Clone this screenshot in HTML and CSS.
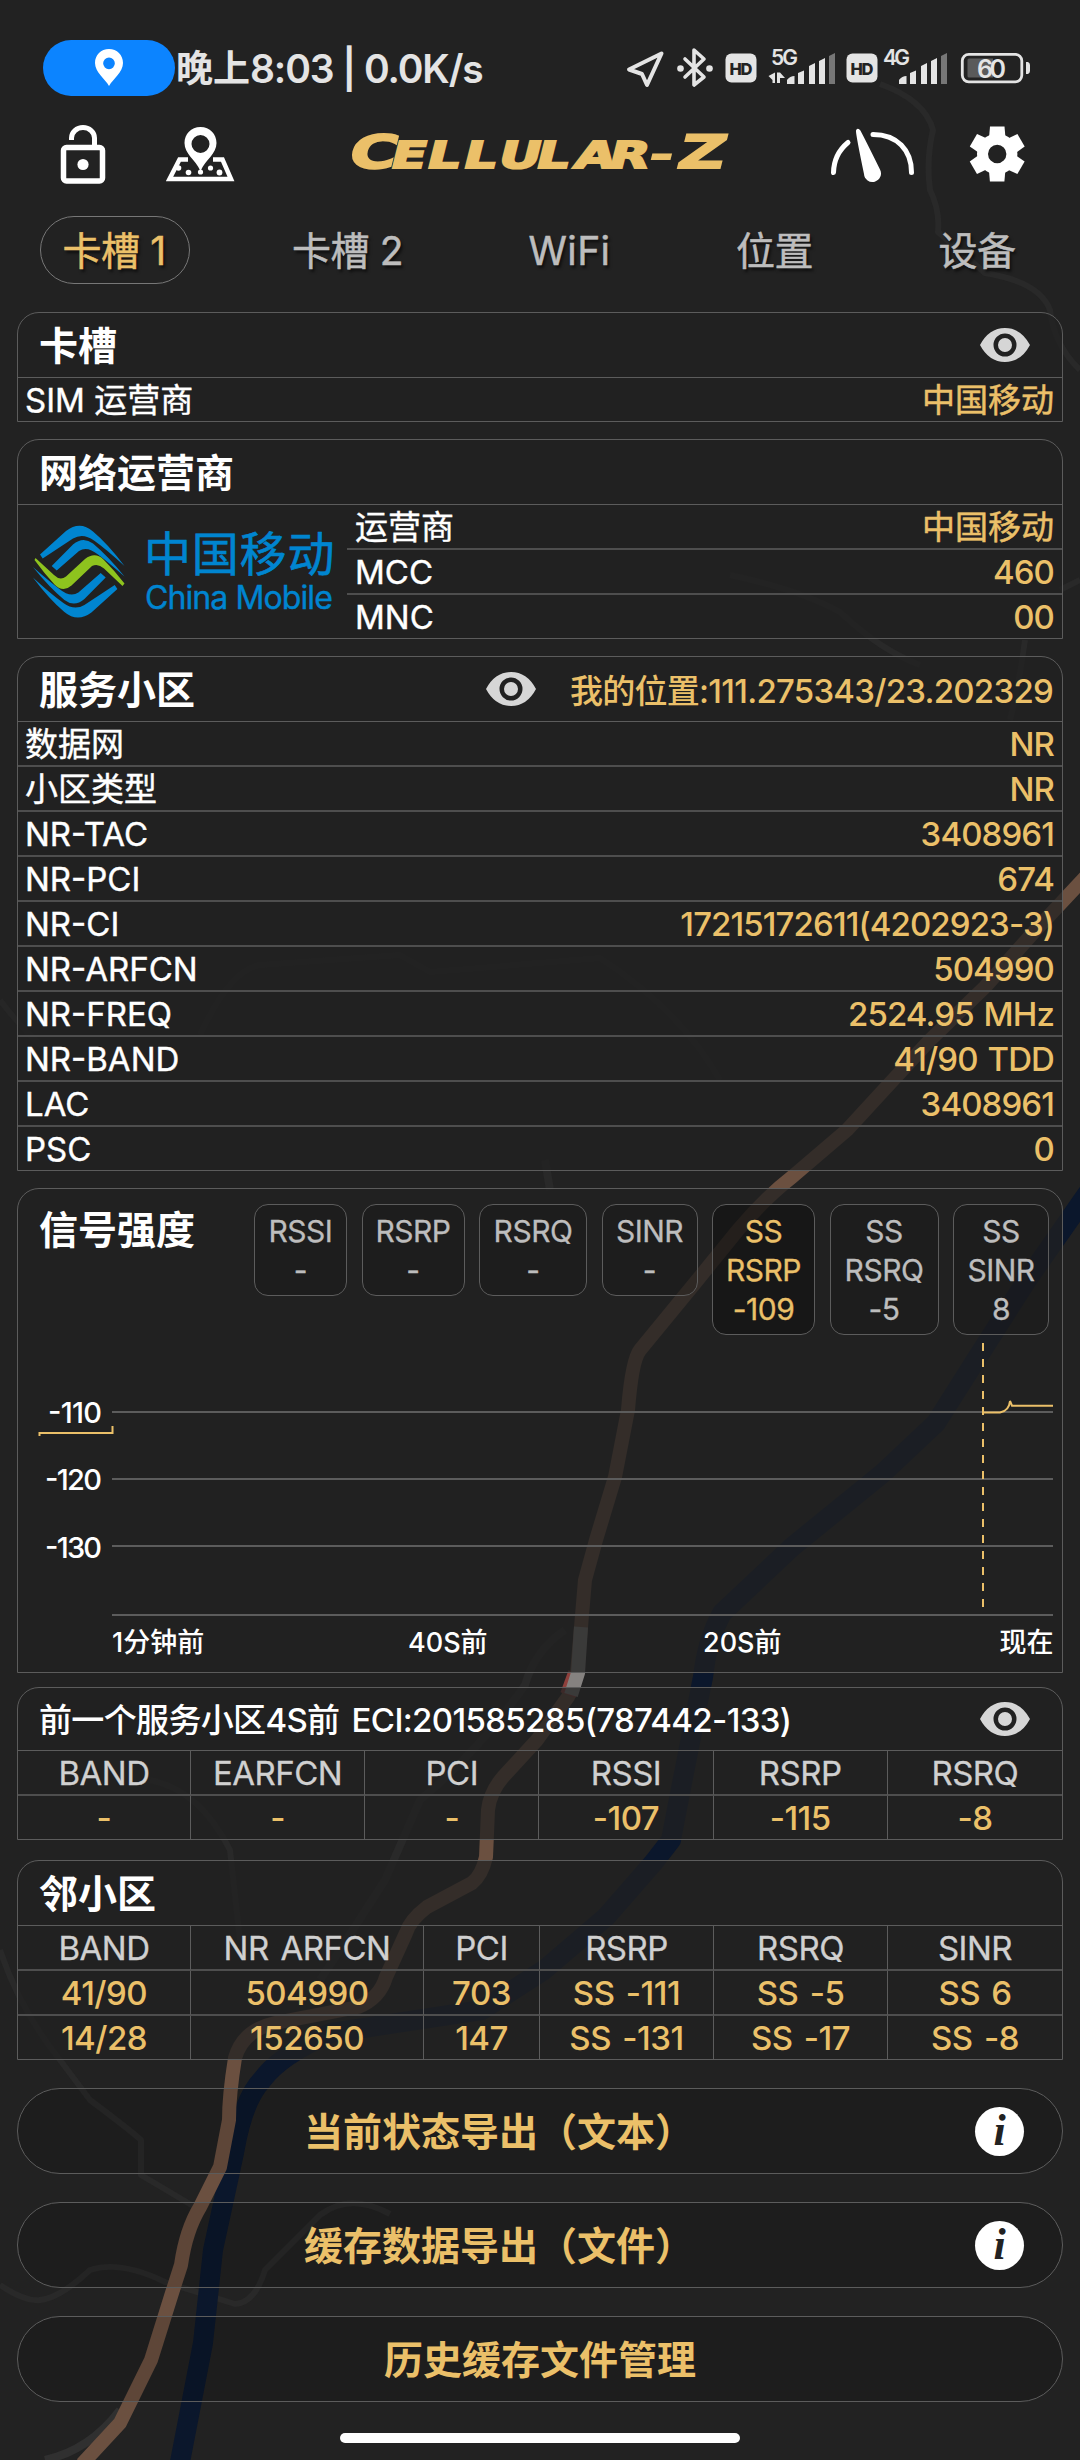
FILE: index.html
```html
<!DOCTYPE html>
<html lang="zh-CN">
<head>
<meta charset="utf-8">
<title>Cellular-Z</title>
<link rel="stylesheet" href="styles.css">
</head>
<body>
<svg class="map" viewBox="0 0 1080 2460" fill="none" stroke-linejoin="round" stroke-linecap="butt">
  <g stroke="#292929" stroke-width="6">
    <path d="M880 84Q925 100 933 130Q926 160 930 190Q940 210 938 232L985 273Q1040 282 1050 310Q1054 345 1080 370"/>
    <path d="M730 575Q800 590 840 612Q880 650 920 665"/>
    <path d="M1025 640Q1020 680 1010 720M1060 590L1080 580"/>
    <path d="M0 1000Q30 1040 60 1060M200 1035Q230 970 260 965L400 955L430 972L600 958Q680 1010 720 1080" stroke="#262626"/>
    <path d="M545 1160L550 1190M565 1630Q535 1650 525 1685Q480 1750 420 1800L385 1880Q340 1950 320 1980" stroke-width="8"/>
    <path d="M150 1780Q200 1790 230 1850L240 1940M0 1950Q20 2010 60 2060L90 2100Q130 2130 141 2140V2175L200 2210"/>
    <path d="M0 2285Q25 2302 40 2300Q60 2298 90 2270Q120 2260 165 2282L235 2304Q255 2303 265 2270L320 2215Q350 2192 390 2214"/>
  </g>
  <path d="M120 2410Q90 2450 45 2460" stroke="#303030" stroke-width="8"/>
  <path stroke="#0b172c" stroke-width="20" d="M1090 1190L1027 1280L974 1363L936 1423L883 1473L792 1547L722 1613Q707 1640 703 1677L682 1783L671 1840L654 1862L606 1917L544 1970L482 2010L331 2033Q280 2055 262 2080Q243 2100 234 2153L213 2250L203 2343L180 2462"/>
  <path stroke="#6b5040" stroke-width="14" d="M1090 872L1033 933L985 987L930 1040L881 1093L847 1130L792 1177Q765 1198 738 1230L695 1283L640 1350Q632 1360 628 1410L615 1477L596 1540L585 1580L581 1627L577 1673L568 1697L537 1740L503 1777Q490 1792 488 1810L486 1857Q482 1875 472 1883L427 1907Q410 1920 406 1933L386 1977Q380 1998 358 2007L275 2023Q243 2030 235 2058Q229 2095 229 2120L220 2167L200 2207Q186 2230 181 2265L172 2293L151 2360L120 2423L82 2464"/>
  <path stroke="#8e403c" stroke-width="16" d="M576 1673L568 1695"/>
  <path stroke="#858280" stroke-width="14" d="M581 1627L578 1673L571 1695"/>
</svg>

<header class="status">
  <div class="status-pill">
    <svg width="28" height="38" viewBox="0 0 28 38"><path fill="#fff" fill-rule="evenodd" d="M14 0C6 0 0 6 0 14C0 23 10 30 14 37C18 30 28 23 28 14C28 6 22 0 14 0ZM14 8.500A5.800 5.800 0 1 1 14 20.200A5.800 5.800 0 1 1 14 8.500Z"/></svg>
  </div>
  <div class="clock">晚上<span class="clock-num">8:03 | 0.0K/s</span></div>
  <svg class="status-icons" width="406" height="44" viewBox="626 46 406 44" fill="#e4e4e4">
    <path fill="none" stroke="#e4e4e4" stroke-width="4" stroke-linejoin="round" d="M629 69.500L661.500 53.500L647 85L642 74Z"/>
    <path fill="none" stroke="#e4e4e4" stroke-width="3.600" stroke-linejoin="round" stroke-linecap="round" d="M685 59L704 77L694 85V50L704 59L685 77"/>
    <circle cx="680.500" cy="68.500" r="3.300"/><circle cx="709.500" cy="68.500" r="3.300"/>
    <rect x="725.500" y="53.500" width="31" height="29" rx="6"/>
    <rect x="846.500" y="53.500" width="31" height="29" rx="6"/>
    <text class="hd" x="729.500" y="74.500" textLength="23">HD</text>
    <text class="hd" x="850.500" y="74.500" textLength="23">HD</text>
    <text class="net" x="771" y="64.500" textLength="27">5G</text>
    <text class="net" x="883" y="64.500" textLength="27">4G</text>
    <path d="M775 72.500V83H772.500V80L768.500 76ZM777 83V72.500H780L785 78H780V83Z"/>
    <g id="bars"><path d="M787 84V80Q790 76 794.500 76V84ZM798 84V73L804 70.500V84ZM809 84V66L815 63V84ZM819 84V61L825 58V84Z"/><path fill="#777" d="M829 84V56L835 53V84Z"/></g>
    <use href="#bars" x="112"/>
    <rect x="962.300" y="54.300" width="59.500" height="27.500" rx="6.500" fill="none" stroke="#e4e4e4" stroke-width="2.800"/>
    <path fill="#5a5a5a" d="M969 58.500H993V77.500H969Q967.500 77.500 967.500 76V60Q967.500 58.500 969 58.500Z"/>
    <path d="M1026 62H1028Q1030 63 1030 65V71Q1030 73 1028 74H1026Z"/>
    <text class="batt" x="977" y="77.500" textLength="29">60</text>
  </svg>
</header>

<div class="toolbar">
  <svg class="ic-lock" width="46" height="59" viewBox="60 124 46 59"><path fill="none" stroke="#fff" stroke-width="5" d="M71.500 139V137A11.500 10.500 0 0 1 94.500 137V147"/><rect x="63.500" y="146.500" width="39" height="33.500" rx="3" fill="none" stroke="#fff" stroke-width="5.500"/><circle cx="83" cy="163.500" r="5.600" fill="#fff"/></svg>
  <svg class="ic-map" width="71" height="56" viewBox="165 126 71 56"><path fill="none" stroke="#fff" stroke-width="4.500" d="M188 159.500H179.500L169.500 179H231L222.500 159.500H213"/><path fill="#fff" fill-rule="evenodd" d="M200.500 127C191 127 184.500 134 184.500 143C184.500 154 195 159 200.500 171C206 159 216.500 154 216.500 143C216.500 134 210 127 200.500 127ZM200.500 135A9 9 0 1 1 200.500 153A9 9 0 1 1 200.500 135Z"/><g fill="#fff"><circle cx="178.500" cy="168" r="2.800"/><circle cx="188.500" cy="172.500" r="2.800"/><circle cx="200.500" cy="172" r="2.600"/><circle cx="210.500" cy="168" r="2.600"/><circle cx="219.500" cy="172.500" r="2.900"/></g></svg>
  <svg class="brand" width="400" height="60" viewBox="340 125 400 60"><g transform="translate(42.100 0) skewX(-14) scale(1.400 1)"><text class="brand-text" y="169" x="247.500 277.500 303.500 329.500 354.500 381.500 409 433.500 461 482.500">C<tspan class="brand-sm">ELLULAR</tspan><tspan class="brand-dash" dy="2">-</tspan><tspan dy="-2">Z</tspan></text></g></svg>
  <svg class="ic-speed" width="86" height="56" viewBox="830 126 86 56"><path fill="none" stroke="#fff" stroke-width="5" stroke-linecap="round" d="M833.500 172.500Q834 154 848 142.500M873 134.500C897 134.500 911.500 150 911.500 172.500"/><path fill="#fff" d="M856 130.500Q857 127.500 860 130Q861 131 880 169.500A8.500 8.500 0 1 1 864 174Q855.500 133 856 130.500Z"/></svg>
  <svg class="ic-gear" width="56" height="58" viewBox="969 126 56 58"><g fill="#fff"><path id="tooth" d="M990 127.500H1004.500L1005.500 139H989Z"/><use href="#tooth" transform="rotate(60 997.200 155)"/><use href="#tooth" transform="rotate(120 997.200 155)"/><use href="#tooth" transform="rotate(180 997.200 155)"/><use href="#tooth" transform="rotate(240 997.200 155)"/><use href="#tooth" transform="rotate(300 997.200 155)"/></g><circle cx="997.200" cy="155" r="14.700" fill="none" stroke="#fff" stroke-width="11"/></svg>
</div>

<nav class="tabs"><span class="tab active">卡槽 1</span><span class="tab">卡槽 2</span><span class="tab wide">WiFi</span><span class="tab">位置</span><span class="tab">设备</span></nav>

<main>
  <section class="card">
    <div class="head"><h2>卡槽</h2>
      <svg class="eye" viewBox="0 0 50 34"><path id="eye" fill="#d6d6d6" fill-rule="evenodd" d="M0 17Q9 0 25 0Q41 0 50 17Q41 34 25 34Q9 34 0 17ZM25 5.500A11.500 11.500 0 1 0 25 28.500A11.500 11.500 0 1 0 25 5.500ZM25 10A7 7 0 1 1 25 24A7 7 0 1 1 25 10Z"/></svg>
    </div>
    <div class="row"><span>SIM 运营商</span><b class="cjk">中国移动</b></div>
  </section>

  <section class="card">
    <div class="head"><h2>网络运营商</h2></div>
    <div class="operator">
      <div class="carrier">
        <svg width="94" height="94" viewBox="0 0 94 94">
          <g id="waves" fill="#0085d0">
            <path d="M8 29.500L34 6Q48-4.500 61 6.500Q76 19 92.500 41Q74 24 62 15.500Q51 7.500 41 13.500L10.700 33.500Z"/>
            <path d="M19.700 41L41 19.500Q51 11 61 18.500Q76 31 92.500 51.500Q76 37 66 29.500Q55 20.500 47 26L24.700 45.500Z"/>
          </g>
          <use href="#waves" transform="rotate(180 46.700 46.700)"/>
          <path fill="#8ec31e" d="M3.500 33L22 50Q28 56 34 51.500L53 34Q63 26.500 71.500 34.500Q82 45 92.500 58.500L90.500 61L72 43.500Q66 38 60 41L39.500 60.500Q31 68 22.500 59.500Q12 48 2.500 35Z"/>
        </svg>
        <div class="carrier-name"><span class="cn">中国移动</span><span class="en">China Mobile</span></div>
      </div>
      <div class="rows">
        <div class="row"><span>运营商</span><b class="cjk">中国移动</b></div>
        <div class="row"><span>MCC</span><b>460</b></div>
        <div class="row"><span>MNC</span><b>00</b></div>
      </div>
    </div>
  </section>

  <section class="card serving">
    <div class="head"><h2>服务小区</h2>
      <svg class="eye" viewBox="0 0 50 34"><use href="#eye"/></svg>
      <span class="where">我的位置:111.275343/23.202329</span>
    </div>
    <div class="rows">
      <div class="row"><span>数据网</span><b>NR</b></div>
      <div class="row"><span>小区类型</span><b>NR</b></div>
      <div class="row"><span>NR-TAC</span><b>3408961</b></div>
      <div class="row"><span>NR-PCI</span><b>674</b></div>
      <div class="row"><span>NR-CI</span><b>17215172611(4202923-3)</b></div>
      <div class="row"><span>NR-ARFCN</span><b>504990</b></div>
      <div class="row"><span>NR-FREQ</span><b>2524.95 MHz</b></div>
      <div class="row"><span>NR-BAND</span><b>41/90 TDD</b></div>
      <div class="row"><span>LAC</span><b>3408961</b></div>
      <div class="row"><span>PSC</span><b>0</b></div>
    </div>
  </section>

  <section class="card signal">
    <div class="signal-head"><h2>信号强度</h2>
      <div class="chips">
        <div class="chip">RSSI<br>-</div><div class="chip">RSRP<br>-</div><div class="chip">RSRQ<br>-</div><div class="chip">SINR<br>-</div><div class="chip tall on">SS<br>RSRP<br>-109</div><div class="chip tall">SS<br>RSRQ<br>-5</div><div class="chip tall">SS<br>SINR<br>8</div>
      </div>
    </div>
    <svg class="chart" viewBox="18 1336 1044 336">
      <g fill="#5c5c5c"><rect x="112" y="1411" width="941" height="2"/><rect x="112" y="1478" width="941" height="2"/><rect x="112" y="1545" width="941" height="2"/><rect x="112" y="1614" width="941" height="2"/></g>
      <g fill="none" stroke="#ebc069" stroke-width="2"><path d="M39.500 1436V1433H112.500V1426"/><path d="M983 1343V1607" stroke-dasharray="8 8"/><path d="M983 1412.500H1000Q1009 1411 1010 1401L1012 1405.700H1053"/></g>
      <g class="axis">
        <text class="num" x="102" y="1423" text-anchor="end" textLength="54">-110</text><text class="num" x="102" y="1490" text-anchor="end" textLength="57">-120</text><text class="num" x="102" y="1558" text-anchor="end" textLength="57">-130</text>
        <text x="112" y="1651.500">1分钟前</text><text x="408" y="1651.500">40S前</text><text x="703" y="1651.500">20S前</text><text x="1053.500" y="1651.500" text-anchor="end">现在</text>
      </g>
    </svg>
  </section>

  <section class="card previous">
    <div class="head"><span class="sub">前一个服务小区4S前 ECI:201585285(787442-133)</span><svg class="eye" viewBox="0 0 50 34"><use href="#eye"/></svg></div>
    <div class="table">
      <span>BAND</span><span>EARFCN</span><span>PCI</span><span>RSSI</span><span>RSRP</span><span>RSRQ</span>
      <b>-</b><b>-</b><b>-</b><b>-107</b><b>-115</b><b>-8</b>
    </div>
  </section>

  <section class="card neighbours">
    <div class="head"><h2>邻小区</h2></div>
    <div class="table">
      <span>BAND</span><span>NR ARFCN</span><span>PCI</span><span>RSRP</span><span>RSRQ</span><span>SINR</span>
      <b>41/90</b><b>504990</b><b>703</b><b>SS -111</b><b>SS -5</b><b>SS 6</b>
      <b>14/28</b><b>152650</b><b>147</b><b>SS -131</b><b>SS -17</b><b>SS -8</b>
    </div>
  </section>

  <div class="actions">
    <button class="action has-info"><span>当前状态导出（文本）</span><i class="info">i</i></button>
    <button class="action has-info"><span>缓存数据导出（文件）</span><i class="info">i</i></button>
    <button class="action"><span>历史缓存文件管理</span></button>
  </div>
</main>
<div class="home-bar"></div>
</body>
</html>
```

FILE: styles.css
```css
* { box-sizing: border-box; }
body {
  position: relative;
  margin: 0;
  width: 1080px;
  height: 2460px;
  overflow: hidden;
  background: #222;
  color: #fff;
  font: 400 33px/1 Inter, "Noto Sans CJK SC", sans-serif;
}
.map { position: absolute; inset: 0; z-index: -1; width: 1080px; height: 2460px; }
svg { display: block; flex: none; }
h2 { margin: 0; font-size: 39px; font-weight: 700; }
b { font-weight: 500; color: #ebc069; }

.status { display: flex; align-items: center; height: 56px; margin: 40px 0 0 43px; }
.status-pill { display: flex; align-items: center; justify-content: center; width: 132px; height: 56px; border-radius: 28px; background: #0c84ff; }
.clock { display: flex; align-items: center; width: 451px; padding-left: 1px; color: #e4e4e4; font-size: 37px; font-weight: 600; white-space: nowrap; }
.clock-num { font-size: 39px; letter-spacing: -1.1px; }
.hd { font: 800 16.500px Inter, sans-serif; fill: #222; }
.net { font: 600 21px Inter, sans-serif; }
.batt { font: 600 25px Inter, sans-serif; }

.toolbar { display: flex; align-items: center; height: 60px; margin: 28px 0 0 60px; }
.ic-map { margin-left: 59px; }
.brand { margin-left: 104px; overflow: visible; }
.brand-text { font: bold 46px "DejaVu Sans", sans-serif; fill: #ebc069; stroke: #ebc069; stroke-width: 2px; }
.brand-sm { font-size: 37px; }
.brand-dash { font-size: 46px; stroke-width: 0; }
.ic-speed { margin-left: 90px; }
.ic-gear { margin-left: 53px; }

.tabs { display: grid; grid-template-columns: 150px 156px 127px 122px 122px; column-gap: 80.500px; margin: 32px 0 0 40px; }
.tab { display: flex; align-items: center; justify-content: center; height: 68px; padding-right: 2px; border: 1px solid transparent; border-radius: 34px; color: #bdbdbd; font-size: 39px; letter-spacing: -.4px; white-space: nowrap; text-shadow: 2px 3px 3px rgba(0, 0, 0, .6); -webkit-text-stroke: .5px; }
.tab.wide { letter-spacing: .4px; }
.tab.active { border-color: #777; color: #ebc069; }

main { margin: 28px 17px 0; }
.card { margin-bottom: 17px; border: 1px solid #5c5c5c; border-radius: 22px 22px 0 0; background: rgba(34, 34, 34, .75); }
.head { display: flex; align-items: center; height: 65px; padding: 0 32px 0 21px; border-bottom: 1px solid #5c5c5c; }
.head .eye { margin-left: auto; }
.eye { width: 50px; height: 34px; }
.where { margin: 5px -23px 0 34px; color: #ebc069; font-weight: 500; letter-spacing: -.75px; white-space: nowrap; }
.row { display: flex; align-items: center; justify-content: space-between; height: 43px; padding: 1px 8px 0 7px; }
.row span { -webkit-text-stroke: .4px; }
.row b { letter-spacing: -.9px; word-spacing: 2px; }
.row b.cjk { font-weight: 400; letter-spacing: 0; -webkit-text-stroke: .5px; }
.rows .row { height: 45px; border-bottom: 2px solid #4e4e4e; }
.rows .row:last-child { height: 44px; border: 0; }
.serving .rows .row:last-child { height: 43px; }
.operator { display: flex; height: 133px; }
.carrier { display: flex; align-items: center; width: 329px; padding-left: 14px; }
.carrier-name { display: flex; flex-direction: column; margin: 2px 0 0 18px; color: #0085d0; white-space: nowrap; }
.cn { font-size: 47px; line-height: 50px; letter-spacing: .8px; -webkit-text-stroke: .6px; }
.en { margin-left: 1px; font-size: 32px; line-height: 38px; letter-spacing: -.9px; -webkit-text-stroke: .4px; }
.operator .rows { flex: 1; }
.operator .row { padding-left: 8px; }

.signal { height: 485px; margin-bottom: 14px; }
.signal-head { display: flex; height: 147px; padding: 15px 13px 0 21px; }
.signal-head h2 { margin-top: 6px; }
.chips { display: grid; grid-template-columns: 93px 103px 108px 96px 103px 109px 96px; justify-content: space-between; align-items: start; width: 795px; margin-left: auto; }
.chip { height: 92px; padding-top: 7px; border: 1px solid #5c5c5c; border-radius: 14px; background: rgba(0, 0, 0, .1); color: #bdbdbd; font-size: 30px; line-height: 39px; letter-spacing: -.5px; text-align: center; -webkit-text-stroke: .3px; }
.chip.tall { height: 131px; }
.chip.on { background: rgba(0, 0, 0, .3); color: #ebc069; }
.chart { width: 1044px; height: 336px; }
.axis { fill: #fff; font-size: 27px; font-weight: 500; }
.axis .num { font-size: 29px; }

.previous { margin-bottom: 20px; }
.previous .head { height: 63px; }
.sub { padding-top: 2px; font-weight: 500; letter-spacing: -.65px; word-spacing: 4px; white-space: nowrap; }
.table { display: grid; grid-template-columns: 173px repeat(5, 1fr); grid-auto-rows: 45px; margin-bottom: -2px; }
.neighbours .table { grid-template-columns: 173px 233px 116px 1fr 1fr 1fr; }
.table > * { display: flex; align-items: center; justify-content: center; padding-top: 2px; border-right: 1px solid #5c5c5c; border-bottom: 2px solid #4e4e4e; letter-spacing: -.5px; word-spacing: 3px; white-space: nowrap; }
.table > span { color: #d0d0d0; -webkit-text-stroke: .3px; }
.table > :nth-child(6n) { border-right: 0; }
.table > :nth-last-child(-n+6) { height: 43px; border-bottom: 0; }

.actions { display: grid; gap: 28px; margin-top: 28px; }
.action { display: flex; align-items: center; justify-content: center; height: 86px; margin: 0; padding: 0; border: 1px solid #5c5c5c; border-radius: 43px; background: rgba(0, 0, 0, .12); color: #ebc069; font: 700 39px/1 Inter, "Noto Sans CJK SC", sans-serif; }
.has-info { padding-right: 38px; }
.has-info span { flex: 1; padding-left: 5px; }
.info { display: grid; place-items: center; width: 49px; height: 49px; border-radius: 50%; background: #fff; color: #222; font: italic bold 44px/1 "Liberation Serif", serif; }
.home-bar { width: 400px; height: 10px; margin: 31px auto 0; border-radius: 5px; background: #fff; }
```
